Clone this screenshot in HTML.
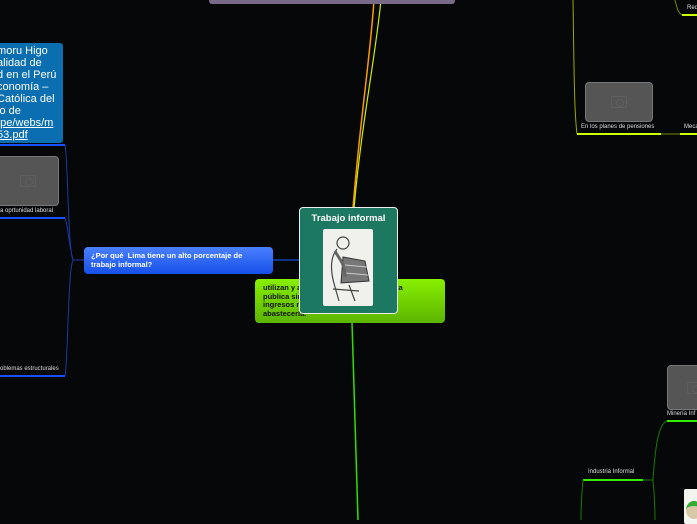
<!DOCTYPE html>
<html><head><meta charset="utf-8"><style>
*{margin:0;padding:0;box-sizing:border-box}
body{width:697px;height:520px;background:#060709;position:relative;overflow:hidden;font-family:"Liberation Sans",sans-serif}
.a{position:absolute}
.lbl{position:absolute;color:#ddd;font-size:6px;white-space:nowrap}
.img{position:absolute;background:#555;border:1px solid #777;border-radius:4px}
.cam{position:absolute;left:50%;top:50%;width:16px;height:12px;margin:-6px 0 0 -8px;border:1px solid #5e5e5e;border-radius:2px}
.cam:after{content:"";position:absolute;left:4px;top:2px;width:6px;height:6px;border:1px solid #5e5e5e;border-radius:50%}
</style></head><body>
<svg class="a" style="left:0;top:0" width="697" height="520">
<path d="M374 0 C370 60 360 120 353 208" stroke="#ff9900" stroke-width="1.5" fill="none"/>
<path d="M381 0 C375 60 362 120 354 208" stroke="#ccee00" stroke-width="1.2" fill="none"/>
<path d="M352 322 L358 520" stroke="#33dd00" stroke-width="1.5" fill="none"/>
<path d="M272 260 L299 260" stroke="#1a4cd8" stroke-width="1.2"/>
<path d="M84 260 L73 260 C68 250 68 160 65 145 M73 260 C68 270 68 360 65 376 M73 260 C68 240 68 225 65 218" stroke="#1a3aa0" stroke-width="1" fill="none"/>
<path d="M0 145 L65 145 M0 218 L65 218 M0 376 L65 376" stroke="#1a50ff" stroke-width="2"/>
<path d="M573 0 C574 60 574 110 577 134" stroke="#99aa00" stroke-width="1" fill="none"/>
<path d="M577 134 L661 134 M680 134 L697 134 M682 15 L697 15" stroke="#ccff00" stroke-width="2"/>
<path d="M661 134 L680 134 M675 0 C677 8 678 13 682 15" stroke="#778800" stroke-width="1" fill="none"/>
<path d="M667 421 L697 421 M583 480 L643 480" stroke="#33ee00" stroke-width="2"/>
<path d="M643 480 L653 480 M667 421 C658 424 655 450 653 480 C655 500 655 510 655 520 M583 480 C582 490 581 505 581 520" stroke="#1a7a00" stroke-width="1" fill="none"/>
</svg>
<div class="a" style="left:209px;top:-6px;width:246px;height:10px;background:#7a6a8a;border-radius:3px"></div>
<div class="a" style="left:-6px;top:43px;width:69px;height:100px;background:#0a6eb0;border-radius:3px;color:#fff;font-size:11px;line-height:12px;padding:2px 0 0 0;white-space:nowrap;overflow:hidden">
<div>&nbsp;moru Higo</div><div>&nbsp;alidad de</div><div>&nbsp;d en el Perú</div><div>&nbsp;conomía –</div><div>&nbsp;Católica del</div><div>&nbsp;lo de</div><div style="text-decoration:underline">&nbsp;.pe/webs/m</div><div style="text-decoration:underline">&nbsp;53.pdf</div></div>
<div class="img" style="left:-4px;top:156px;width:63px;height:50px"><div class="cam"></div></div>
<div class="lbl" style="left:0;top:208px">a oprtunidad laboral</div>
<div class="lbl" style="left:0;top:366px">oblemas estructurales</div>
<div class="a" style="left:84px;top:247px;width:189px;height:27px;border-radius:4px;background:linear-gradient(#4a80ff,#1650e8);color:#fff;font-weight:bold;font-size:7.5px;line-height:9px;padding:4px 0 0 7px">¿Por qué&nbsp; Lima tiene un alto porcentaje de<br>trabajo informal?</div>
<div class="a" style="left:255px;top:279px;width:190px;height:44px;border-radius:4px;background:linear-gradient(#88f000,#5cb400);color:#111;font-weight:bold;font-size:7.5px;line-height:8.5px;padding:5px 0 0 8px">utilizan y aprovechan la infraestructura<br>pública sin pagar por ellos, sus<br>ingresos no son suficientes para<br>abastecería.</div>
<div class="a" style="left:299px;top:207px;width:99px;height:107px;background:#1c7860;border:1.5px solid #eee;border-radius:4px">
<div style="color:#fff;font-weight:bold;font-size:9.5px;text-align:center;margin-top:5px">Trabajo informal</div>
<div class="a" style="left:23px;top:21px;width:50px;height:77px;background:#f0f0ec;border-radius:2px">
<svg width="50" height="77"><g stroke="#444" fill="none" stroke-width="1.2"><circle cx="20" cy="14" r="6"/><path d="M14 20 C6 30 8 45 12 58 L16 72 M26 56 L32 72 M10 60 L36 62"/></g><path d="M20 28 L42 32 L46 52 L18 54 Z" fill="#777" stroke="#333"/><path d="M22 36 L44 38 M22 44 L45 46" stroke="#ccc"/><path d="M12 22 C16 30 22 34 22 48" stroke="#666" stroke-width="3" fill="none"/></svg></div></div>
<div class="img" style="left:585px;top:82px;width:68px;height:40px"><div class="cam"></div></div>
<div class="lbl" style="left:581px;top:124px">En los planes de pensiones</div>
<div class="lbl" style="left:684px;top:124px">Meca</div>
<div class="lbl" style="left:687px;top:5px">Red</div>
<div class="img" style="left:667px;top:365px;width:40px;height:45px"><div class="cam" style="left:70%"></div></div>
<div class="lbl" style="left:667px;top:411px">Minería Inf</div>
<div class="lbl" style="left:588px;top:469px">Industria Informal</div>
<div class="a" style="left:684px;top:489px;width:20px;height:35px;background:#f4f4f0;border-radius:2px;overflow:hidden"><div class="a" style="left:2px;top:12px;width:16px;height:18px;border-radius:50%;background:#d8c8a8;border-top:5px solid #3a3"></div></div>
</body></html>
